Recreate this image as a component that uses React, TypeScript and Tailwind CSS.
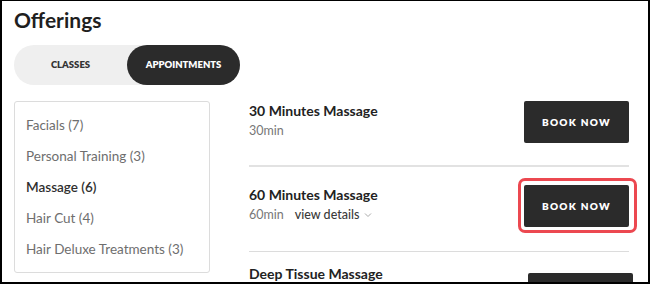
import React from "react";

const categories = [
  { name: "Facials (7)", active: false },
  { name: "Personal Training (3)", active: false },
  { name: "Massage (6)", active: true },
  { name: "Hair Cut (4)", active: false },
  { name: "Hair Deluxe Treatments (3)", active: false },
];

function BookButton() {
  return (
    <button className="h-[42px] w-[105px] shrink-0 rounded-[2px] bg-[#2b2b2b] text-[10px] font-extrabold tracking-[1.3px] text-white">
      BOOK NOW
    </button>
  );
}

export default function App() {
  return (
    <div
      className="h-[284px] w-[650px] overflow-hidden border-x-2 border-b-2 border-t border-black bg-white text-[#222]"
      style={{ fontFamily: "Lato, 'Open Sans', sans-serif" }}
    >
      <div className="px-[12px] pt-[5px]">
        {/* Title */}
        <h1 className="text-[21px] font-bold leading-[28px] text-[#1f1f1f]">Offerings</h1>

        {/* Classes / Appointments toggle */}
        <div className="mt-[11px] flex h-[40px] w-[226px] rounded-full bg-[#efefef]">
          <button className="flex-1 text-[9.5px] font-extrabold text-[#333]">CLASSES</button>
          <button className="w-[113px] rounded-full bg-[#2b2b2b] text-[9.5px] font-extrabold text-white">
            APPOINTMENTS
          </button>
        </div>

        <div className="mt-[16px] flex gap-[39px]">
          {/* Category list */}
          <div className="h-[172px] w-[196px] shrink-0 rounded-[3px] border border-[#dcdcdc] px-[11px] pt-[14px]">
            <ul className="flex flex-col gap-[13px]">
              {categories.map((c) => (
                <li
                  key={c.name}
                  className={`text-[13.5px] leading-[18px] ${
                    c.active ? "font-semibold text-[#2f2f2f]" : "text-[#6e6e6e]"
                  }`}
                >
                  {c.name}
                </li>
              ))}
            </ul>
          </div>

          {/* Offerings list */}
          <div className="w-[380px]">
            <div className="flex items-start justify-between pb-[22px]">
              <div>
                <div className="text-[14px] font-bold leading-[20px] text-[#222]">30 Minutes Massage</div>
                <div className="mt-px text-[12.5px] leading-[18px] text-[#777]">30min</div>
              </div>
              <BookButton />
            </div>
            <div className="h-[2px] bg-[#e2e2e2]" />

            <div className="flex items-start justify-between pb-[24px] pt-[18px]">
              <div>
                <div className="text-[14px] font-bold leading-[20px] text-[#222]">60 Minutes Massage</div>
                <div className="mt-px flex items-center text-[12.5px] leading-[18px]">
                  <span className="text-[#777]">60min</span>
                  <span className="ml-[11px] font-medium text-[#3a3a3a]">view details</span>
                  <svg className="ml-[5px]" width="8" height="6" viewBox="0 0 8 6" fill="none">
                    <path d="M1 1.5 4 4.5 7 1.5" stroke="#aaa" strokeWidth="1" />
                  </svg>
                </div>
              </div>
              <div className="relative">
                <BookButton />
                <span className="pointer-events-none absolute -bottom-[6px] -left-[6px] -right-[8px] -top-[7px] rounded-[7px] border-[3px] border-[#ec4850]" />
              </div>
            </div>
            <div className="h-px bg-[#dcdcdc]" />

            <div className="flex items-start justify-between pt-[12px]">
              <div className="text-[14px] font-bold leading-[20px] text-[#222]">Deep Tissue Massage</div>
              <div className="-mr-[4px] mt-[9px]">
                <BookButton />
              </div>
            </div>
          </div>
        </div>
      </div>
    </div>
  );
}
